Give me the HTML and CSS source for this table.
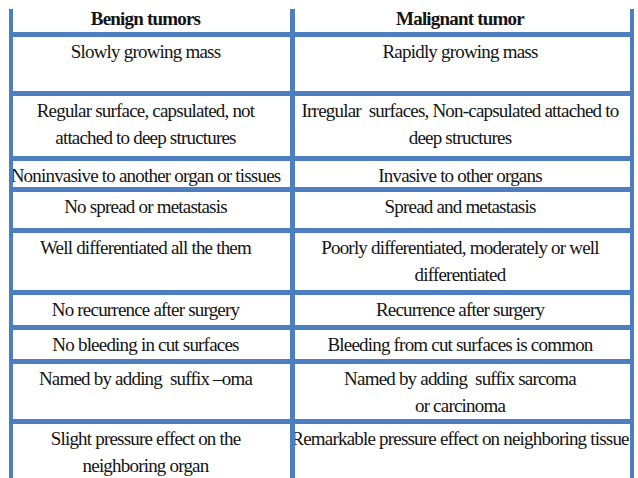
FILE: index.html
```html
<!DOCTYPE html>
<html lang="en">
<head>
<meta charset="utf-8">
<title>Benign vs Malignant tumors</title>
<link rel="stylesheet" href="styles.css">
</head>
<body>
<div class="grid">
  <div class="cell c1 head"><span class="t">Benign tumors</span></div>
  <div class="cell c2 head"><span class="t">Malignant tumor</span></div>

  <div class="cell c1"><span class="t">Slowly growing mass</span></div>
  <div class="cell c2"><span class="t">Rapidly growing mass</span></div>

  <div class="cell c1"><span class="t">Regular surface, capsulated, not
attached to deep structures</span></div>
  <div class="cell c2"><span class="t">Irregular  surfaces, Non-capsulated attached to
deep structures</span></div>

  <div class="cell c1"><span class="t">Noninvasive to another organ or tissues</span></div>
  <div class="cell c2"><span class="t">Invasive to other organs</span></div>

  <div class="cell c1"><span class="t">No spread or metastasis</span></div>
  <div class="cell c2"><span class="t">Spread and metastasis</span></div>

  <div class="cell c1"><span class="t">Well differentiated all the them</span></div>
  <div class="cell c2"><span class="t">Poorly differentiated, moderately or well
differentiated</span></div>

  <div class="cell c1"><span class="t">No recurrence after surgery</span></div>
  <div class="cell c2"><span class="t">Recurrence after surgery</span></div>

  <div class="cell c1"><span class="t">No bleeding in cut surfaces</span></div>
  <div class="cell c2"><span class="t">Bleeding from cut surfaces is common</span></div>

  <div class="cell c1"><span class="t">Named by adding  suffix –oma</span></div>
  <div class="cell c2"><span class="t">Named by adding  suffix sarcoma
or carcinoma</span></div>

  <div class="cell c1"><span class="t">Slight pressure effect on the
neighboring organ</span></div>
  <div class="cell c2"><span class="t">Remarkable pressure effect on neighboring tissue</span></div>
</div>
</body>
</html>
```

FILE: styles.css
```css
html, body {
  margin: 0;
  padding: 0;
  background: #ffffff;
  overflow: hidden;
}

body {
  font-family: "Liberation Serif", "Times New Roman", serif;
  color: #141414;
}

.grid {
  margin: 9px 0 0 9px;
  width: 621px;
  display: grid;
  grid-template-columns: 277px 335px;
  grid-template-rows: 23px 54px 60px 26px 36px 57px 30px 29px 55px 54px;
  column-gap: 5px;
  row-gap: 5px;
  padding-left: 4px;
  background: #4d7fc0;
}

.cell {
  background: #ffffff;
  display: flex;
  justify-content: center;
  align-items: flex-start;
  overflow: clip;
  font-size: 19px;
  line-height: 27px;
  letter-spacing: -0.8px;
  padding-top: 1px;
}

.c1 {
  padding-right: 12px;
}

.c2 {
  padding-right: 5px;
}

.head {
  font-weight: bold;
  line-height: 20px;
  padding-top: 0;
}

.t {
  display: block;
  flex: none;
  white-space: pre;
  text-align: center;
}
```
